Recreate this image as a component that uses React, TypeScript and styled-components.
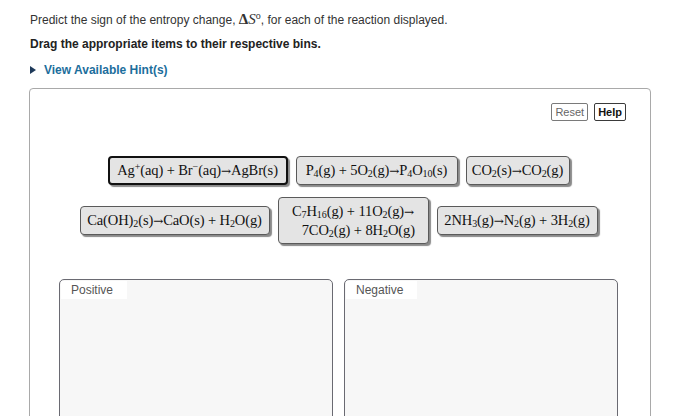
import React from "react";
import styled, { createGlobalStyle } from "styled-components";

const GlobalStyle = createGlobalStyle`
  html, body {
    margin: 0;
    padding: 0;
    background: #ffffff;
  }
  body {
    font-family: "Liberation Sans", Arial, sans-serif;
    font-size: 12px;
    color: #222;
  }
`;

const Page = styled.div`
  padding: 11px 0 0 30px;
  width: 685px;
  height: 416px;
  box-sizing: border-box;
  overflow: hidden;
`;

const Prompt = styled.p`
  margin: 0;
  height: 17px;
  line-height: 17px;
  font-size: 12px;
  color: #333;
`;

const MathVar = styled.span`
  font-family: "Liberation Serif", "Times New Roman", serif;
  font-size: 15px;
`;

const Instruction = styled.p`
  margin: 8px 0 0;
  line-height: 16px;
  font-size: 12px;
  font-weight: bold;
  color: #222;
`;

const HintToggle = styled.div`
  margin-top: 10px;
  display: flex;
  align-items: center;
  gap: 8px;
  height: 16px;
  font-size: 12px;
  font-weight: bold;
  color: #1c6e9c;
`;

const Caret = styled.span`
  width: 0;
  height: 0;
  border-top: 4.5px solid transparent;
  border-bottom: 4.5px solid transparent;
  border-left: 6px solid #1e3a5a;
`;

const Panel = styled.div`
  margin: 10px 0 0 -1px;
  width: 622px;
  height: 340px;
  box-sizing: border-box;
  border: 1px solid #a9a9a9;
  border-radius: 4px;
  padding: 14px 24px 0 29px;
`;

const Toolbar = styled.div`
  display: flex;
  justify-content: flex-end;
  gap: 6px;
`;

const ToolButton = styled.button<{ $strong?: boolean }>`
  font-family: "Liberation Sans", Arial, sans-serif;
  font-size: 11px;
  height: 18px;
  padding: 0 3px;
  background: #fff;
  border: 1px solid ${({ $strong }) => ($strong ? "#3a3a3a" : "#7a7a7a")};
  border-radius: 2px;
  color: ${({ $strong }) => ($strong ? "#111" : "#666")};
  font-weight: ${({ $strong }) => ($strong ? "bold" : "normal")};
`;

const ItemArea = styled.div`
  margin-top: 35px;
  margin-left: -8px;
  display: flex;
  flex-direction: column;
  align-items: center;
  gap: 12px;
`;

const ItemRow = styled.div`
  display: flex;
  align-items: center;
  gap: 8px;
`;

const Item = styled.div<{ $selected?: boolean; $w: number }>`
  width: ${({ $w }) => $w}px;
  box-sizing: border-box;
  background: #e4e4e4;
  border: ${({ $selected }) => ($selected ? "2px solid #111" : "1px solid #5a5a5a")};
  border-radius: 4px;
  box-shadow: 2px 2px 1px #8a8a8a;
  padding: ${({ $selected }) => ($selected ? "3px 4px" : "4px 5px")};
  font-family: "Liberation Serif", "Times New Roman", serif;
  font-size: 14.5px;
  line-height: 18px;
  color: #111;
  text-align: center;
  white-space: nowrap;
  letter-spacing: -0.1px;
`;

const Arrow = styled.span`
  font-family: "DejaVu Serif", serif;
  font-size: 12px;
`;

const Sub = styled.sub`
  font-size: 10px;
  vertical-align: -2px;
  line-height: 0;
`;

const Sup = styled.sup`
  font-size: 10px;
  vertical-align: 5px;
  line-height: 0;
`;

const Bins = styled.div`
  margin-top: 35px;
  display: flex;
  gap: 11px;
`;

const Bin = styled.div`
  width: 274px;
  height: 160px;
  box-sizing: border-box;
  background: #f7f7f7;
  border: 1px solid #6a6a72;
  border-radius: 5px;
  padding: 1px;
`;

const BinLabel = styled.div`
  display: inline-block;
  background: #fff;
  color: #555;
  font-size: 12px;
  line-height: 18px;
  padding: 0 14px 0 10px;
`;

const s = (t: string) => <Sub>{t}</Sub>;
const arrow = <Arrow>→</Arrow>;

export default function App() {
  return (
    <>
      <GlobalStyle />
      <Page>
        <Prompt>
          Predict the sign of the entropy change,{" "}
          <MathVar>
            <b>Δ</b>
            <i>S</i>
            <Sup>o</Sup>
          </MathVar>
          , for each of the reaction displayed.
        </Prompt>
        <Instruction>Drag the appropriate items to their respective bins.</Instruction>
        <HintToggle>
          <Caret />
          View Available Hint(s)
        </HintToggle>
        <Panel>
          <Toolbar>
            <ToolButton>Reset</ToolButton>
            <ToolButton $strong>Help</ToolButton>
          </Toolbar>
          <ItemArea>
            <ItemRow>
              <Item $selected $w={180}>
                Ag<Sup>+</Sup>(aq) + Br<Sup>−</Sup>(aq){arrow}AgBr(s)
              </Item>
              <Item $w={162}>
                P{s("4")}(g) + 5O{s("2")}(g){arrow}P{s("4")}O{s("10")}(s)
              </Item>
              <Item $w={104}>
                CO{s("2")}(s){arrow}CO{s("2")}(g)
              </Item>
            </ItemRow>
            <ItemRow>
              <Item $w={190}>
                Ca(OH){s("2")}(s){arrow}CaO(s) + H{s("2")}O(g)
              </Item>
              <Item $w={151}>
                C{s("7")}H{s("16")}(g) + 11O{s("2")}(g){arrow}
                <br />
                &nbsp;&nbsp;&nbsp;7CO{s("2")}(g) + 8H{s("2")}O(g)
              </Item>
              <Item $w={161}>
                2NH{s("3")}(g){arrow}N{s("2")}(g) + 3H{s("2")}(g)
              </Item>
            </ItemRow>
          </ItemArea>
          <Bins>
            <Bin>
              <BinLabel>Positive</BinLabel>
            </Bin>
            <Bin>
              <BinLabel>Negative</BinLabel>
            </Bin>
          </Bins>
        </Panel>
      </Page>
    </>
  );
}
